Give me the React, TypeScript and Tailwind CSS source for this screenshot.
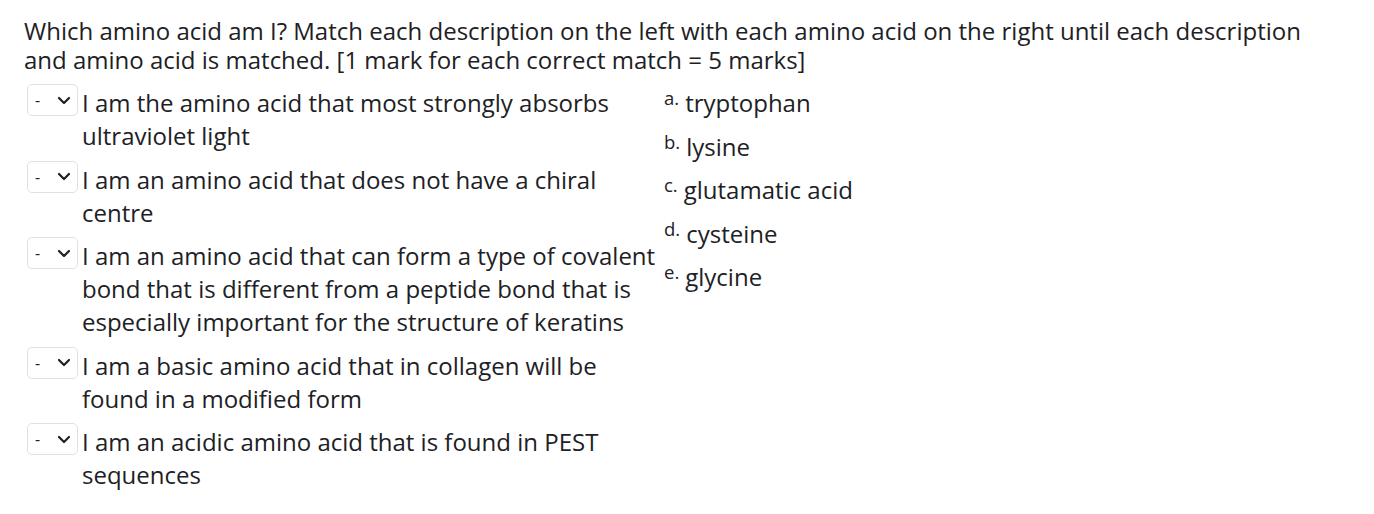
import React from 'react';

const descriptions = [
    "I am the amino acid that most strongly absorbs ultraviolet light",
    "I am an amino acid that does not have a chiral centre",
    "I am an amino acid that can form a type of covalent bond that is different from a peptide bond that is especially important for the structure of keratins",
    "I am a basic amino acid that in collagen will be found in a modified form",
    "I am an acidic amino acid that is found in PEST sequences",
];

const answers = ["tryptophan", "lysine", "glutamatic acid", "cysteine", "glycine"];
const letters = ["a.", "b.", "c.", "d.", "e."];

const Chevron = () => (
    <svg width="14" height="9" viewBox="0 0 14 9" fill="none">
        <path d="M2 2 L7 7 L12 2" stroke="#1d2125" strokeWidth="2.2" strokeLinecap="round" strokeLinejoin="round" />
    </svg>
);

const App = () => {
    return (
        <div className="min-h-[514px] bg-white pl-6 pt-[16px] text-[#1d2125]" style={{ fontFamily: '"Open Sans", sans-serif' }}>
            <p className="text-[24px] leading-[29px] max-w-[1300px]">
                Which amino acid am I? Match each description on the left with each amino acid on the right until each description and amino acid is matched. [1 mark for each correct match = 5 marks]
            </p>
            <div className="flex mt-[10px]">
                <div className="flex flex-col gap-[8.5px] pl-[3px]">
                    {descriptions.map((d, i) => (
                        <div key={i} className="flex items-start gap-[4px]">
                            <div className="w-[51px] h-[32px] shrink-0 border border-[#dee2e6] rounded-[5px] flex items-center justify-between pl-[7px] pr-[6px] text-[16px]">
                                <span className="leading-none">-</span>
                                <Chevron />
                            </div>
                            <div className="w-[578px] text-[24px] leading-[33px] mt-[2px]">{d}</div>
                        </div>
                    ))}
                </div>
                <div className="flex flex-col pl-[4px] mt-[2px]">
                    {answers.map((a, i) => (
                        <div key={i} className="flex items-start h-[43.5px]">
                            <span className="text-[18.5px] leading-[22px] mt-[1px] mr-[6px]">{letters[i]}</span>
                            <span className="text-[24px] leading-[33px]">{a}</span>
                        </div>
                    ))}
                </div>
            </div>
        </div>
    );
};

export default App;
